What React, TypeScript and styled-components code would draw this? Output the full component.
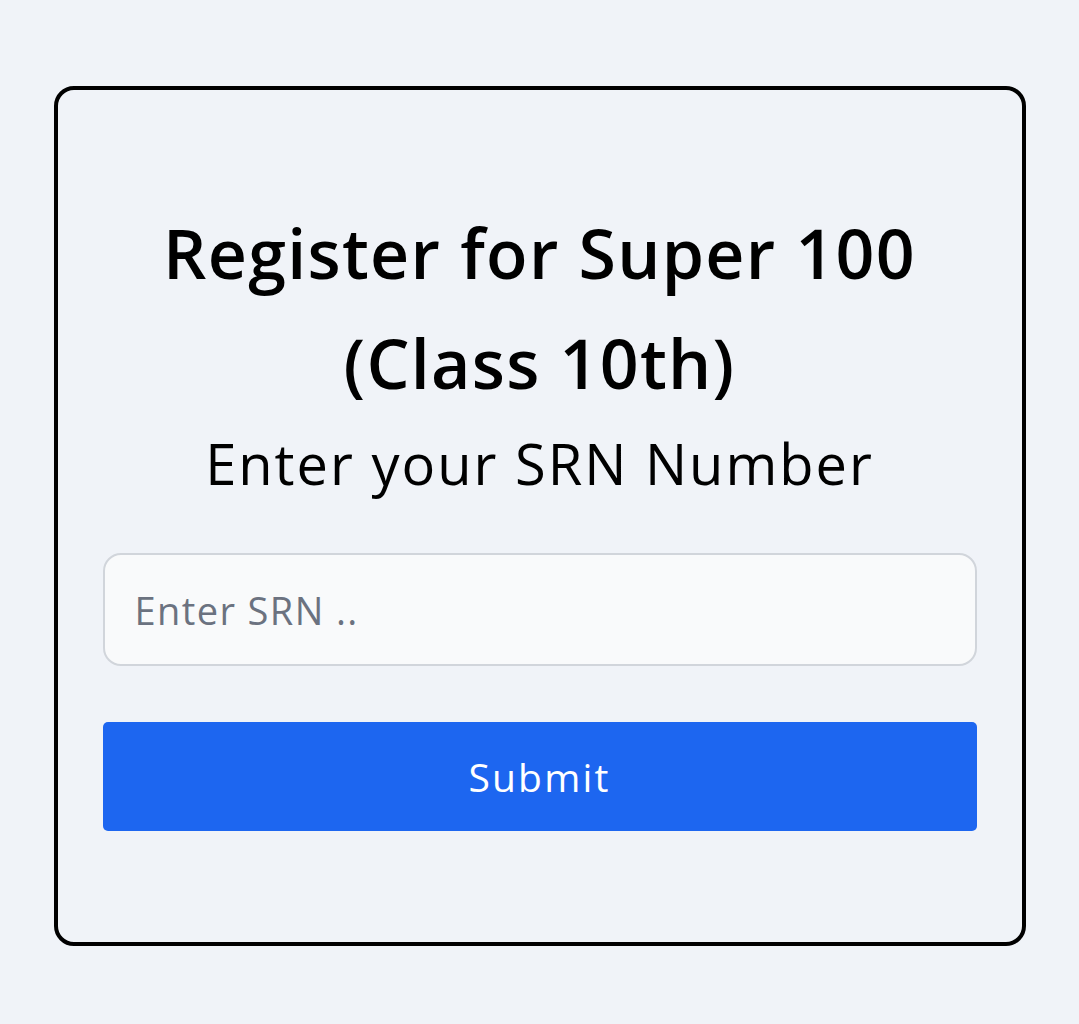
import styled, { createGlobalStyle } from "styled-components";

const GlobalStyle = createGlobalStyle`
  body {
    margin: 0;
    background-color: #f0f3f8;
    font-family: "Open Sans", "Liberation Sans", sans-serif;
  }
`

const Page = styled.div`
  display: flex;
  justify-content: center;
  padding-top: 86px;
  min-height: 1024px;
  box-sizing: border-box;
`

const Card = styled.div`
  width: 972px;
  height: 860px;
  box-sizing: border-box;
  border: 4px solid #000000;
  border-radius: 20px;
  background-color: #f0f3f8;
  padding: 108px 45px 0;
  display: flex;
  flex-direction: column;
  align-items: stretch;
`

const Title = styled.h1`
  margin: 0;
  font-size: 68px;
  line-height: 110px;
  font-weight: 600;
  color: #000000;
  text-align: center;
  letter-spacing: 1.3px;
`

const Subtitle = styled.p`
  margin: 0;
  font-size: 56px;
  line-height: 90px;
  font-weight: 400;
  color: #000000;
  text-align: center;
  letter-spacing: 2px;
`

const SrnInput = styled.input`
  margin-top: 45px;
  height: 113px;
  box-sizing: border-box;
  border: 2px solid #d1d5db;
  border-radius: 18px;
  background-color: #f9fafb;
  padding: 0 30px;
  font-family: inherit;
  font-size: 38px;
  letter-spacing: 1.4px;
  color: #111827;
  outline: none;

  &::placeholder {
    color: #6b7280;
  }
`

const SubmitButton = styled.button`
  margin-top: 56px;
  height: 109px;
  border: none;
  border-radius: 5px;
  background-color: #1d66f0;
  color: #ffffff;
  font-family: inherit;
  font-size: 39px;
  letter-spacing: 2.2px;
  cursor: pointer;
`

const App = () => {
  return (
    <>
      <GlobalStyle />
      <Page>
        <Card>
          <Title>Register for Super 100 (Class 10th)</Title>
          <Subtitle>Enter your SRN Number</Subtitle>
          <SrnInput placeholder="Enter SRN .." />
          <SubmitButton>Submit</SubmitButton>
        </Card>
      </Page>
    </>
  )
}

export default App
